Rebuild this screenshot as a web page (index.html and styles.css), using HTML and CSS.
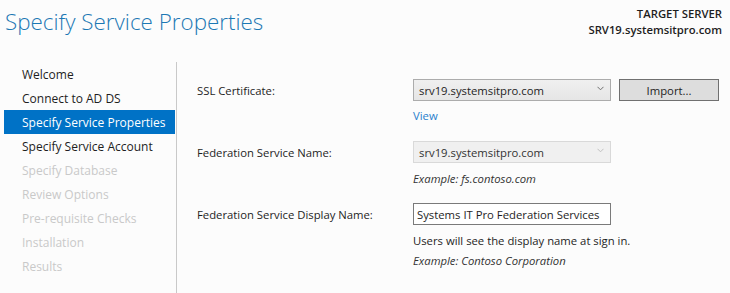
FILE: index.html
```html
<!DOCTYPE html>
<html>
<head>
<meta charset="utf-8">
<link rel="stylesheet" href="styles.css">
</head>
<body>
<div class="page">
  <header class="header">
    <h1 class="title">Specify Service Properties</h1>
    <div class="target">
      <div class="target-label">TARGET SERVER</div>
      <div class="target-name">SRV19.systemsitpro.com</div>
    </div>
  </header>
  <div class="main">
    <nav class="sidebar">
      <div class="step">Welcome</div>
      <div class="step">Connect to AD DS</div>
      <div class="step active">Specify Service Properties</div>
      <div class="step">Specify Service Account</div>
      <div class="step disabled">Specify Database</div>
      <div class="step disabled">Review Options</div>
      <div class="step disabled">Pre-requisite Checks</div>
      <div class="step disabled">Installation</div>
      <div class="step disabled">Results</div>
    </nav>
    <section class="content">
      <div class="field">
        <div class="label">SSL Certificate:</div>
        <div class="control">
          <div class="control-row">
            <div class="select">
              <span>srv19.systemsitpro.com</span>
              <svg class="chev" width="7" height="5" viewBox="0 0 7 5"><path d="M0.5 0.8 L3.5 3.8 L6.5 0.8" fill="none" stroke="#707070" stroke-width="1"/></svg>
            </div>
            <div class="button">Import...</div>
          </div>
          <div class="link">View</div>
        </div>
      </div>
      <div class="field gap2">
        <div class="label">Federation Service Name:</div>
        <div class="control">
          <div class="select disabled-select">
            <span>srv19.systemsitpro.com</span>
            <svg class="chev" width="7" height="5" viewBox="0 0 7 5"><path d="M0.5 0.8 L3.5 3.8 L6.5 0.8" fill="none" stroke="#c0c0c0" stroke-width="1"/></svg>
          </div>
          <div class="note italic">Example: fs.contoso.com</div>
        </div>
      </div>
      <div class="field gap3">
        <div class="label">Federation Service Display Name:</div>
        <div class="control">
          <div class="input">Systems IT Pro Federation Services</div>
          <div class="note">Users will see the display name at sign in.</div>
          <div class="note tight italic">Example: Contoso Corporation</div>
        </div>
      </div>
    </section>
  </div>
</div>
</body>
</html>
```
FILE: styles.css
```css
html, body {
  margin: 0;
  padding: 0;
  background: #fcfcfc;
}
body {
  font-family: "Open Sans", "Noto Sans", sans-serif;
  font-size: 11.3px;
  color: #1e1e1e;
  width: 730px;
  height: 293px;
  overflow: hidden;
}
.page {
  display: flex;
  flex-direction: column;
}
.header {
  height: 62px;
  display: flex;
  justify-content: space-between;
  align-items: flex-start;
}
.title {
  margin: 6px 0 0 5px;
  font-weight: 300;
  font-size: 22.4px;
  line-height: 32px;
  color: #1c78b4;
}
.target {
  margin: 6px 8px 0 0;
  text-align: right;
  font-weight: 600;
  font-size: 11.3px;
  line-height: 16px;
  color: #1e1e1e;
}
.main {
  display: flex;
  height: 231px;
}
.sidebar {
  flex: none;
  width: 177px;
  box-sizing: border-box;
  border-right: 1px solid #c9c9c9;
  font-size: 12px;
}
.step {
  height: 24px;
  box-sizing: border-box;
  padding-top: 2px;
  line-height: 22px;
  margin-left: 4px;
  margin-right: 1px;
  padding-left: 18px;
  white-space: nowrap;
}
.step.active {
  background: #0072c6;
  color: #ffffff;
}
.step.disabled {
  color: #c9c9c9;
}
.content {
  padding: 17px 0 0 20px;
  display: flex;
  flex-direction: column;
}
.field {
  display: flex;
}
.gap2 { margin-top: 15px; }
.gap3 { margin-top: 14px; }
.label {
  width: 216px;
  flex: none;
  height: 22px;
  line-height: 23px;
}
.control {
  display: flex;
  flex-direction: column;
}
.control-row {
  display: flex;
  gap: 8px;
}
.select {
  width: 198px;
  height: 22px;
  box-sizing: border-box;
  border: 1px solid #acacac;
  background: linear-gradient(#f0f0f0, #e6e6e6);
  display: flex;
  align-items: center;
  justify-content: space-between;
  padding: 1px 6px 0 5px;
  line-height: 20px;
}
.chev { margin-top: -4px; }
.disabled-select {
  border-color: #d9d9d9;
  background: #f0f0f0;
  color: #333;
}
.button {
  width: 100px;
  height: 22px;
  box-sizing: border-box;
  border: 1px solid #707070;
  background: #dddddd;
  text-align: center;
  line-height: 21px;
}
.link {
  margin-top: 5px;
  line-height: 20px;
  color: #2a7fcc;
}
.input {
  width: 198px;
  height: 22px;
  box-sizing: border-box;
  border: 1px solid #7a7a7a;
  background: #ffffff;
  padding: 1px 3px 0;
  line-height: 20px;
  white-space: nowrap;
  overflow: hidden;
}
.note {
  margin-top: 6px;
  line-height: 20px;
}
.note.tight { margin-top: 0; }
.italic { font-style: italic; color: #333; }
```
